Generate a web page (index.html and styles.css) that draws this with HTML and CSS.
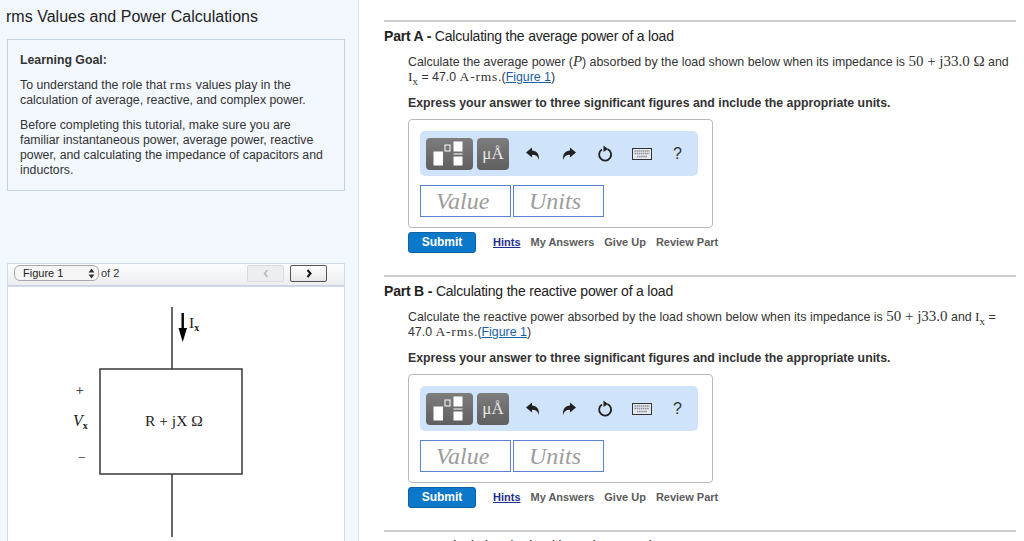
FILE: index.html
```html
<!DOCTYPE html>
<html lang="en">
<head>
<meta charset="utf-8">
<title>rms Values and Power Calculations</title>
<link rel="stylesheet" href="styles.css">
</head>
<body>
<div class="page">
  <aside class="side">
    <h1 class="title">rms Values and Power Calculations</h1>
    <div class="goal">
      <p class="goal-head">Learning Goal:</p>
      <p>To understand the role that <span class="math rms">rms</span> values play in the calculation of average, reactive, and complex power.</p>
      <p>Before completing this tutorial, make sure you are familiar instantaneous power, average power, reactive power, and calculating the impedance of capacitors and inductors.</p>
    </div>
    <div class="figbar">
      <div class="figsel"><span class="figsel-label">Figure 1</span>
        <svg class="updown" width="7" height="11" viewBox="0 0 7 11"><path d="M3.5 0.5 6.5 4.5H0.5ZM3.5 10.5 0.5 6.5H6.5Z"/></svg>
      </div>
      <span class="figof">of 2</span>
      <div class="fignav">
        <button class="navbtn off"><svg width="8" height="9" viewBox="0 0 8 9"><path d="M5.5 1 2.5 4.5 5.5 8" fill="none" stroke="#b5b9bd" stroke-width="1.6"/></svg></button>
        <button class="navbtn on"><svg width="8" height="9" viewBox="0 0 8 9"><path d="M2.5 1 5.5 4.5 2.5 8" fill="none" stroke="#111" stroke-width="2"/></svg></button>
      </div>
    </div>
    <div class="figbox">
      <svg class="circuit" width="336" height="255" viewBox="0 0 336 255">
        <g fill="none" stroke="#444" stroke-width="1.6">
          <path d="M164 20V82M164 187V250"/>
          <rect x="92" y="82" width="142" height="105"/>
        </g>
        <path d="M174.700 26V44" stroke="#000" stroke-width="2.4"/>
        <path d="M170.500 41H179L174.700 55Z" fill="#000"/>
        <text class="ct large" x="181" y="41">I<tspan class="sub" dy="3">x</tspan></text>
        <text class="ct plus" x="67.500" y="108">+</text>
        <text class="ct ital" x="65" y="139">V<tspan class="sub" dy="3">x</tspan></text>
        <text class="ct" x="70" y="175">−</text>
        <text class="ct large" x="137" y="139">R + jX Ω</text>
      </svg>
    </div>
  </aside>
  <main class="main">
    <section class="part">
      <h2 class="part-title"><b>Part A -</b> Calculating the average power of a load</h2>
      <div class="part-body">
        <p class="q">Calculate the average power (<i class="math big">P</i>) absorbed by the load shown below when its impedance is <span class="math big">50 + j33.0 Ω</span> and <span class="math">I<sub>x</sub></span> = 47.0 <span class="math rms">A-rms</span>.(<a href="#">Figure 1</a>)</p>
        <p class="ask">Express your answer to three significant figures and include the appropriate units.</p>
        <div class="card">
          <div class="tools">
            <div class="tbtn wide">
              <svg width="36" height="28" viewBox="0 0 36 28"><rect x="1.500" y="11.500" width="9.500" height="14" fill="#fff"/><rect x="13" y="5" width="5" height="6" fill="none" stroke="#fff"/><rect x="21.500" y="1.500" width="9" height="10" fill="#fff"/><rect x="21.500" y="13.500" width="9" height="1" fill="#fff"/><rect x="21.500" y="16.500" width="9" height="9" fill="#fff"/></svg>
            </div>
            <div class="tbtn unit"><span>μÅ</span></div>
            <svg class="ti t1" width="16" height="16" viewBox="0 0 16 16"><path d="M1 6.500 7 1.500V4.500C11.500 4.500 14.500 8 14 14C13 10.500 11 8.800 7 8.800V11.500Z"/></svg>
            <svg class="ti t2" width="16" height="16" viewBox="0 0 16 16"><path d="M15 6.500 9 1.500V4.500C4.500 4.500 1.500 8 2 14C3 10.500 5 8.800 9 8.800V11.500Z"/></svg>
            <svg class="ti t3" width="16" height="18" viewBox="0 0 16 18"><path d="M10.500 4.100A6 6 0 1 1 5 4.500" fill="none" stroke="#222" stroke-width="1.800"/><path d="M6.500 0.500 11 4 6.500 7Z"/></svg>
            <svg class="ti t4" width="20" height="12" viewBox="0 0 20 12"><rect x="0.500" y="0.500" width="19" height="11" fill="#e4e9ee" stroke="#333"/><path d="M2.500 3H17.500M2.500 5.500H17.500M5 8.500H15" stroke="#8b9096" stroke-width="1.300" stroke-dasharray="1.500 .6"/></svg>
            <span class="help">?</span>
          </div>
          <div class="inputs">
            <div class="field"><span>Value</span></div>
            <div class="field"><span>Units</span></div>
          </div>
        </div>
        <div class="actions">
          <button class="submit">Submit</button>
          <a class="act hint" href="#">Hints</a>
          <span class="act">My Answers</span>
          <span class="act">Give Up</span>
          <span class="act">Review Part</span>
        </div>
      </div>
    </section>
    <section class="part">
      <h2 class="part-title"><b>Part B -</b> Calculating the reactive power of a load</h2>
      <div class="part-body">
        <p class="q">Calculate the reactive power absorbed by the load shown below when its impedance is <span class="math big">50 + j33.0</span> and <span class="math">I<sub>x</sub></span> = 47.0 <span class="math rms">A-rms</span>.(<a href="#">Figure 1</a>)</p>
        <p class="ask">Express your answer to three significant figures and include the appropriate units.</p>
        <div class="card">
          <div class="tools">
            <div class="tbtn wide">
              <svg width="36" height="28" viewBox="0 0 36 28"><rect x="1.500" y="11.500" width="9.500" height="14" fill="#fff"/><rect x="13" y="5" width="5" height="6" fill="none" stroke="#fff"/><rect x="21.500" y="1.500" width="9" height="10" fill="#fff"/><rect x="21.500" y="13.500" width="9" height="1" fill="#fff"/><rect x="21.500" y="16.500" width="9" height="9" fill="#fff"/></svg>
            </div>
            <div class="tbtn unit"><span>μÅ</span></div>
            <svg class="ti t1" width="16" height="16" viewBox="0 0 16 16"><path d="M1 6.500 7 1.500V4.500C11.500 4.500 14.500 8 14 14C13 10.500 11 8.800 7 8.800V11.500Z"/></svg>
            <svg class="ti t2" width="16" height="16" viewBox="0 0 16 16"><path d="M15 6.500 9 1.500V4.500C4.500 4.500 1.500 8 2 14C3 10.500 5 8.800 9 8.800V11.500Z"/></svg>
            <svg class="ti t3" width="16" height="18" viewBox="0 0 16 18"><path d="M10.500 4.100A6 6 0 1 1 5 4.500" fill="none" stroke="#222" stroke-width="1.800"/><path d="M6.500 0.500 11 4 6.500 7Z"/></svg>
            <svg class="ti t4" width="20" height="12" viewBox="0 0 20 12"><rect x="0.500" y="0.500" width="19" height="11" fill="#e4e9ee" stroke="#333"/><path d="M2.500 3H17.500M2.500 5.500H17.500M5 8.500H15" stroke="#8b9096" stroke-width="1.300" stroke-dasharray="1.500 .6"/></svg>
            <span class="help">?</span>
          </div>
          <div class="inputs">
            <div class="field"><span>Value</span></div>
            <div class="field"><span>Units</span></div>
          </div>
        </div>
        <div class="actions">
          <button class="submit">Submit</button>
          <a class="act hint" href="#">Hints</a>
          <span class="act">My Answers</span>
          <span class="act">Give Up</span>
          <span class="act">Review Part</span>
        </div>
      </div>
    </section>
    <section class="part">
      <h2 class="part-title"><b>Part C -</b> Calculating the load impedance and power</h2>
    </section>
  </main>
</div>
</body>
</html>
```
FILE: styles.css
```css
* { box-sizing: border-box; }
html, body { margin: 0; height: 541px; overflow: hidden; background: #fff; }
body { font-family: "Liberation Sans", Arial, sans-serif; color: #333; font-size: 12.370px; }
p { margin: 0; }
.page { display: flex; height: 541px; }
.side { width: 359px; flex: none; background: #f3f8ff; border-right: 1px solid #dbe3ee; padding: 0 13px 0 7px; display: flex; flex-direction: column; }
.title { margin: 7px 0 0 -1px; font-size: 16px; font-weight: 400; line-height: 20px; color: #222; height: 32px; letter-spacing: 0.020px; }
.goal { border: 1px solid #c5d3e3; height: 152px; padding: 13px 12px 0; line-height: 15px; font-size: 12.300px; }
.goal p { margin-bottom: 10px; }
.goal .goal-head { font-weight: 700; margin-bottom: 10px; }
.math { font-family: "Liberation Serif", serif; font-size: 13.500px; line-height: 0; }
.math.big { font-size: 15px; }
.math.rms { white-space: nowrap; letter-spacing: 0.800px; }
sub { font-size: 11px; line-height: 0; }
.figbar { margin-top: 72px; height: 23px; display: flex; align-items: center; padding: 0 0 3px 6px; border: 1px solid #cfdbe8; border-bottom-color: #c9d4e0; background: linear-gradient(#fcfdfe, #eceef0); }
.figsel { width: 85px; height: 16px; border: 1px solid #a8a8a8; border-radius: 6px; background: #f5f5f5; display: flex; align-items: center; justify-content: space-between; padding: 0 3px 0 8px; font-size: 11px; color: #222; }
.updown { fill: #333; }
.figof { margin-left: 2px; font-size: 11px; }
.fignav { margin-left: auto; display: flex; gap: 6px; margin-right: 17px; }
.navbtn { width: 37px; height: 17px; padding: 0; display: flex; align-items: center; justify-content: center; border-radius: 2px; }
.navbtn.off { border: 1px solid #d8dadc; background: #eceeef; margin-left: 1px; }
.navbtn.on { border: 1px solid #555; background: linear-gradient(#fff, #e8e8e8); }
.figbox { margin-top: 0; flex: 1; border: 1px solid #cfdbe8; border-bottom: 0; background: #fff; overflow: hidden; }
.circuit { display: block; }
.ct { font-family: "Liberation Serif", serif; font-size: 13.500px; fill: #222; }
.ct.large { font-size: 15.500px; }
.ct.plus { font-size: 15px; }
.ct.ital { font-size: 16px; font-style: italic; }
.sub { font-size: 10px; font-style: normal; font-weight: 700; }
.main { flex: 1; padding: 20px 8px 0 25px; min-width: 0; }
.part { border-top: 2px solid #ccc; height: 255px; }
.part-title { margin: 6px 0 0; font-size: 14px; font-weight: 400; line-height: 16px; color: #222; letter-spacing: -0.200px; }
.part-title b { font-weight: 700; }
.part-body { padding-left: 24px; }
.q { margin-top: 11px; line-height: 15px; }
.q a, .q a:visited { color: #1a5fa8; text-decoration: underline; }
.ask { margin-top: 11px; font-weight: 700; line-height: 15px; font-size: 12.300px; }
.card { margin-top: 8px; width: 305px; height: 109px; border: 1px solid #b9b9b9; border-radius: 4px; padding: 11px 11px 0; background: #fff; }
.tools { width: 278px; height: 45px; background: #cfe4fb; border-radius: 5px; display: flex; align-items: center; padding-left: 6px; }
.tbtn { height: 32px; border-radius: 4px; background: linear-gradient(#7d7d7d, #5f5f5f); display: flex; align-items: center; justify-content: center; }
.tbtn.wide { width: 47px; }
.tbtn.unit { width: 32px; margin-left: 4px; color: #e6e6e6; font-family: "Liberation Serif", serif; font-size: 17px; }
.ti { flex: none; fill: #222; }
.t1 { margin-left: 16px; }
.t2 { margin-left: 20px; }
.t3 { margin-left: 20px; }
.t4 { margin-left: 19px; }
.help { margin-left: 21px; font-size: 16px; color: #333; }
.inputs { display: flex; gap: 2px; margin-top: 9px; }
.field { width: 91px; height: 32px; border: 1px solid #5b82d6; display: flex; align-items: center; padding-left: 15px; font-family: "Liberation Serif", serif; font-style: italic; font-size: 24px; color: #9c9c9c; }
.actions { display: flex; align-items: center; margin-top: 4px; font-size: 11px; font-weight: 700; }
.submit { width: 68px; height: 21px; border: 1px solid #0e62a8; border-radius: 3px; background: #0b78c9; color: #fff; font: 700 12px "Liberation Sans", Arial, sans-serif; padding: 0 0 2px; }
.act { color: #5c5c5c; margin: 0 0 2px 10px; }
.act.hint { color: #1d2f8f; text-decoration: underline; margin-left: 17px; }
```
